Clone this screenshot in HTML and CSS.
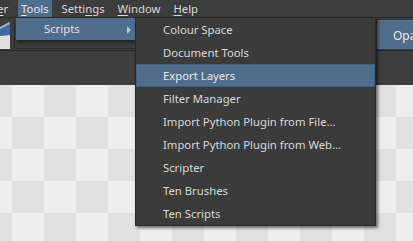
FILE: index.html
```html
<!DOCTYPE HTML>
<html lang="en">
<head>
<meta charset="UTF-8">
<title>Tools - Scripts</title>
<link rel="stylesheet" href="styles.css">
</head>
<body>
  <div id="app">
    <ul id="menuBar">
      <li class="first"><u>e</u>r</li>
      <li class="on"><u>T</u>ools</li>
      <li>Setti<u>n</u>gs</li>
      <li><u>W</u>indow</li>
      <li><u>H</u>elp</li>
    </ul>
    <div id="toolBar">
      <svg class="brush" width="10" height="28" viewBox="0 0 10 28">
        <polygon points="0,6 9,1 10,2 10,13 0,14" fill="#3f6b9e"/>
        <polygon points="0,5 9,0 10,2 0,7" fill="#9ab5d6"/>
        <polygon points="0,14 10,13 10,27 0,27" fill="#dedede"/>
      </svg>
      <div class="frame"><div class="inner"></div></div>
      <div class="opacity">Opa</div>
    </div>
    <div id="dock"></div>
    <div id="canvas"></div>

    <div id="toolsMenu">
      <div class="item">Scripts<span class="arrow"></span></div>
    </div>
    <ul id="scriptsMenu">
      <li>Colour Space</li>
      <li>Document Tools</li>
      <li class="on">Export Layers</li>
      <li>Filter Manager</li>
      <li>Import Python Plugin from File...</li>
      <li>Import Python Plugin from Web...</li>
      <li>Scripter</li>
      <li>Ten Brushes</li>
      <li>Ten Scripts</li>
    </ul>
  </div>
</body>
</html>
```

FILE: styles.css
```css
* { margin: 0; padding: 0; box-sizing: border-box; }
ul { list-style: none; }
html, body { height: 100%; overflow: hidden; }
body {
  font-family: "Noto Sans", "Open Sans", sans-serif;
  font-size: 11.3px;
  color: #d8d8d8;
  background: #3c3c3c;
}
u { text-decoration: underline; text-underline-offset: 2px; }

#app {
  position: relative;
  display: flex;
  flex-direction: column;
  height: 100%;
}

/* menu bar */
#menuBar {
  display: flex;
  gap: 7px;
  height: 18px;
  background: #3c3c3c;
  border-bottom: 1px solid #2c2c2c;
}
#menuBar li {
  padding: 0 3px;
  line-height: 17px;
}
#menuBar li.first { margin-left: -3px; padding-left: 0; padding-right: 3px; }
#menuBar li.on { background: #4f6d8c; color: #e6e6e6; }

/* tool bar */
#toolBar {
  display: flex;
  align-items: stretch;
  gap: 4px;
  height: 33px;
  padding: 2px 0 1px 0;
  background: #3b3b3b;
  border-bottom: 1px solid #2a2a2a;
}
#toolBar .brush { margin-top: 2px; flex: none; }
#toolBar .frame {
  flex: 1;
  border: 1px solid #2b2b2b;
  border-radius: 3px;
  padding: 3px;
}
#toolBar .inner {
  height: 100%;
  border-top: 1px solid #2f2f2f;
}
#toolBar .opacity {
  width: 36px;
  margin-left: 2px;
  padding: 7px 0 0 16px;
  background: #4f6d8c;
  color: #ececec;
  font-size: 12px;
}

#dock {
  height: 34px;
  background: #3e3e3e;
}

#canvas {
  flex: 1;
  background: repeating-conic-gradient(#e1e1e1 0 25%, #ededed 0 50%) 12px 0 / 64px 64px;
}

/* popups */
#toolsMenu {
  position: absolute;
  left: 16px;
  top: 18px;
  width: 119px;
  height: 22px;
  background: #4f6d8c;
  box-shadow: 1px 2px 3px rgba(0, 0, 0, 0.45);
}
#toolsMenu .item {
  position: relative;
  padding-left: 28px;
  line-height: 22px;
  color: #e2e2e2;
}
#toolsMenu .arrow {
  position: absolute;
  left: 111px;
  top: 8px;
  border-left: 4px solid #b8c4d0;
  border-top: 4px solid transparent;
  border-bottom: 4px solid transparent;
}

#scriptsMenu {
  position: absolute;
  left: 135px;
  top: 17px;
  width: 241px;
  background: #3b3b3b;
  border: 1px solid #282828;
  box-shadow: 2px 2px 3px rgba(0, 0, 0, 0.55);
}
#scriptsMenu li {
  height: 23px;
  line-height: 23px;
  padding-left: 27px;
  color: #d8d8d8;
}
#scriptsMenu li.on {
  background: #4f6d8c;
  box-shadow: inset 0 0 0 1px #445e79;
  color: #e8e8e8;
}
```
